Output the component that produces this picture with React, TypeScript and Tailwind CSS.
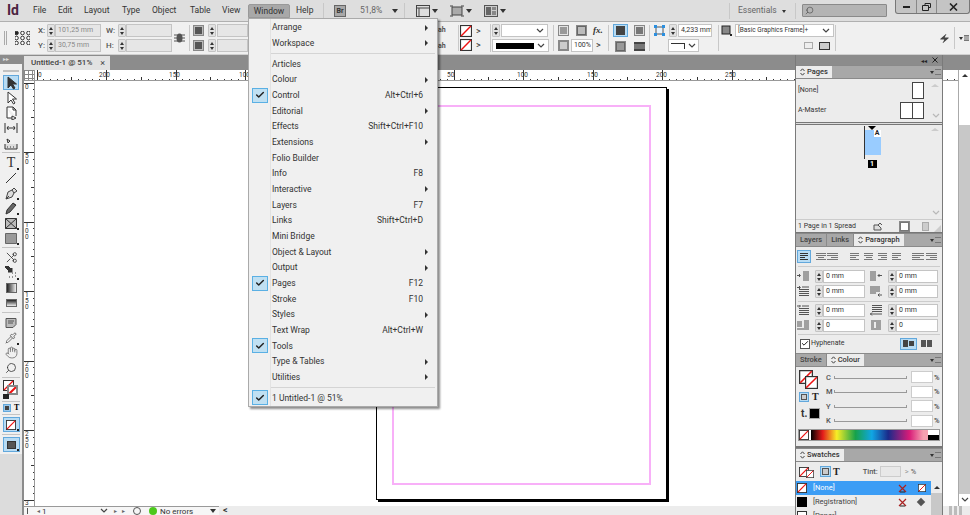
import React from 'react';
import { Hand, Pipette, Scissors, Search, Check, Zap } from 'lucide-react';

const FONT = "font-['Roboto','Noto_Sans',sans-serif]";

function Sep({ className = 'h-[28px]' }: { className?: string }) {
  return <div className={`w-px shrink-0 bg-[#c8c8c8] ${className}`} />;
}

function Spin({ className = 'h-[13px]' }: { className?: string }) {
  return (
    <div className={`w-[8px] shrink-0 flex flex-col justify-center items-center gap-[2px] bg-[#e2e2e2] border border-[#c4c4c4] rounded-[1px] ${className}`}>
      <div className="w-0 h-0 border-x-[2.5px] border-x-transparent border-b-[3px] border-b-[#333]" />
      <div className="w-0 h-0 border-x-[2.5px] border-x-transparent border-t-[3px] border-t-[#333]" />
    </div>
  );
}

function Chevron({ className = '' }: { className?: string }) {
  return (
    <svg width="8" height="6" viewBox="0 0 8 6" className={`shrink-0 ${className}`}>
      <path d="M1 1l3 3 3-3" fill="none" stroke="#444" strokeWidth="1.2" />
    </svg>
  );
}

function Tri({ className = '' }: { className?: string }) {
  return <div className={`w-0 h-0 shrink-0 border-x-[3px] border-x-transparent border-t-[4px] border-t-[#333] ${className}`} />;
}

function Field({ w, text, off, drop, small }: { w: string; text?: string; off?: boolean; drop?: boolean; small?: boolean }) {
  return (
    <div className={`${w} h-[13px] shrink-0 flex items-center justify-between pl-[2px] pr-[3px] border border-[#c4c4c4] ${small ? 'text-[6.5px]' : 'text-[7px]'} font-normal leading-none whitespace-nowrap overflow-hidden ${off ? 'bg-[#e6e6e6] text-[#888]' : 'bg-white text-[#333]'}`}>
      <span>{text}</span>
      {drop && <Chevron />}
    </div>
  );
}

function Glyph({ d, w = 13, h = 13, fill = 'none', stroke = '#333', className = '' }: { d: string; w?: number; h?: number; fill?: string; stroke?: string; className?: string }) {
  return (
    <svg width={w} height={h} viewBox={`0 0 ${w} ${h}`} className={`shrink-0 ${className}`}>
      <path d={d} fill={fill} stroke={stroke} strokeWidth="1" />
    </svg>
  );
}

function NoneBox({ size = 11 }: { size?: number }) {
  return (
    <svg width={size} height={size} viewBox="0 0 11 11" className="shrink-0">
      <rect x="0.5" y="0.5" width="10" height="10" fill="#fff" stroke="#333" />
      <path d="M1 10L10 1" stroke="#e11" strokeWidth="1.3" />
    </svg>
  );
}

function Block({ dark = '#555', light = '#bbb' }: { dark?: string; light?: string }) {
  return (
    <div className="w-[11px] h-[11px] shrink-0 border border-[#888] p-[1px]" style={{ background: light }}>
      <div className="w-full h-full" style={{ background: dark }} />
    </div>
  );
}

function MenuBar() {
  const items: [string, string][] = [
    ['File', 'w-[25px]'], ['Edit', 'w-[26px]'], ['Layout', 'w-[38px]'], ['Type', 'w-[30px]'],
    ['Object', 'w-[38px]'], ['Table', 'w-[32px]'], ['View', 'w-[26px]'],
  ];
  return (
    <div className="h-[22px] flex items-start bg-[#dedede] border-b border-[#b0b0b0] text-[8.5px] text-[#333] shrink-0 overflow-hidden">
      <span className="w-[33px] shrink-0 pl-[7px] text-[14px] leading-[20px] font-bold text-[#4c2442]">Id</span>
      {items.map(([t, w]) => (
        <span key={t} className={`${w} shrink-0 leading-[21px]`}>{t}</span>
      ))}
      <span className="w-[42px] shrink-0 h-[14px] mt-[4px] bg-[#a8a8a8] border border-[#999] rounded-t-[2px] text-center leading-[12px]">Window</span>
      <span className="w-[33px] shrink-0 pl-[6px] leading-[21px]">Help</span>
      <Sep className="h-[16px] mt-[3px]" />
      <div className="w-[12px] h-[12px] shrink-0 ml-[10px] mt-[5px] bg-[#a8a8a8] border border-[#666] text-[7px] leading-[10px] text-center font-bold">Br</div>
      <span className="ml-[14px] w-[32px] shrink-0 leading-[21px] text-[#666]">51,8%</span>
      <Tri className="mt-[9px]" />
      <Sep className="h-[16px] mt-[3px] ml-[6px]" />
      <div className="ml-[11px] mt-[5px] shrink-0 flex items-center gap-[2px]">
        <svg width="14" height="12" viewBox="0 0 14 12"><rect x="0.5" y="0.5" width="13" height="11" fill="#ddd" stroke="#444" /><path d="M0 3h14M3 3v9" stroke="#444" /></svg>
        <Tri />
      </div>
      <div className="ml-[12px] mt-[5px] shrink-0 flex items-center gap-[2px]">
        <svg width="14" height="12" viewBox="0 0 14 12"><rect x="2" y="2" width="10" height="8" fill="#aaa" stroke="#444" /><path d="M0 1h3M0 11h3M11 1h3M11 11h3" stroke="#444" /></svg>
        <Tri />
      </div>
      <div className="ml-[12px] mt-[5px] shrink-0 flex items-center gap-[2px]">
        <svg width="14" height="12" viewBox="0 0 14 12"><rect x="0.5" y="0.5" width="13" height="11" fill="#ccc" stroke="#555" /><rect x="2" y="2" width="5" height="8" fill="#666" /><rect x="8" y="2" width="4" height="3" fill="#888" /><rect x="8" y="6" width="4" height="4" fill="#888" /></svg>
        <Tri />
      </div>
      <Sep className="h-[16px] mt-[3px] ml-[223px]" />
      <span className="w-[52px] shrink-0 pl-[8px] leading-[21px] text-[#666] whitespace-nowrap">Essentials</span>
      <div className="mt-[10px] w-0 h-0 shrink-0 border-x-[2px] border-x-transparent border-t-[3px] border-t-[#333]" />
      <Sep className="h-[16px] mt-[3px] ml-[9px]" />
      <div className="ml-[6px] mt-[4px] w-[85px] h-[13px] shrink-0 bg-[#b4b4b4] border border-[#8a8a8a] rounded-[1px] pl-[2px] flex items-center">
        <Search size={9} strokeWidth={1.4} className="text-[#333] -scale-x-100" />
      </div>
      <div className="ml-[8px] w-[75px] h-[14px] shrink-0 bg-[#c4c4c4] border border-t-0 border-[#777] rounded-b-[3px] flex text-[#222]">
        <div className="w-[21px] flex justify-center items-center border-r border-[#888]"><div className="w-[7px] h-[2px] bg-[#222]" /></div>
        <div className="w-[20px] flex justify-center items-center border-r border-[#888]">
          <svg width="9" height="8" viewBox="0 0 9 8"><path d="M3 2V.5h5.500v4H6.500M.5 2.500h6v5h-6z" fill="none" stroke="#222" /></svg>
        </div>
        <div className="flex-1 flex justify-center items-center">
          <svg width="9" height="8" viewBox="0 0 9 8"><path d="M1 .5l7 7M8 .5l-7 7" stroke="#222" strokeWidth="1.6" /></svg>
        </div>
      </div>
    </div>
  );
}

function ControlBar() {
  return (
    <div className="h-[33px] flex items-center bg-[#f0f0f0] border-b border-[#d0d0d0] text-[#333] shrink-0 overflow-hidden">
      <div className="ml-[4px] w-[3px] h-[14px] shrink-0 border-x border-[#aaa]" />
      <svg width="15" height="14" viewBox="0 0 15 14" className="ml-[8px] shrink-0">
        {[1.5, 7.5, 13.5].map((x) => [2, 7, 12].map((y) => (
          <circle key={`${x}-${y}`} cx={x} cy={y} r="1.8" fill={x === 1.5 && y === 2 ? '#222' : '#fff'} stroke="#333" />
        )))}
      </svg>
      <div className="ml-[8px] shrink-0 flex flex-col gap-[2px] text-[8px] font-medium text-[#555]">
        <div className="flex items-center h-[13px]"><span className="w-[9px]">X:</span><Spin /><Field w="w-[46px]" text="101,25 mm" off /></div>
        <div className="flex items-center h-[13px]"><span className="w-[9px]">Y:</span><Spin /><Field w="w-[46px]" text="30,75 mm" off /></div>
      </div>
      <div className="ml-[5px] shrink-0 flex flex-col gap-[2px] text-[8px] font-medium text-[#555]">
        <div className="flex items-center h-[13px]"><span className="w-[12px]">W:</span><Spin /><Field w="w-[46px]" off /></div>
        <div className="flex items-center h-[13px]"><span className="w-[12px]">H:</span><Spin /><Field w="w-[46px]" off /></div>
      </div>
      <svg width="11" height="12" viewBox="0 0 11 12" className="ml-[2px] shrink-0">
        <ellipse cx="5.5" cy="6" rx="3" ry="4.5" fill="#555" />
        <path d="M0 3h11M0 6h11M0 9h11" stroke="#555" />
      </svg>
      <Sep className="ml-[4px] h-[26px]" />
      <div className="ml-[3px] shrink-0 flex flex-col gap-[2px]">
        <div className="flex items-center h-[13px]"><Block /><Spin className="h-[13px] ml-[4px]" /><div className="ml-[1px]"><Field w="w-[31px]" off /></div></div>
        <div className="flex items-center h-[13px]"><Block /><Spin className="h-[13px] ml-[4px]" /><div className="ml-[1px]"><Field w="w-[31px]" off /></div></div>
      </div>
      {/* everything from here to x=438 sits behind the open menu */}
      <div className="w-[190px] shrink-0" />
      <div className="w-[11px] shrink-0 flex flex-col gap-[5px] text-[7px] font-bold text-[#555]"><span>ah</span><span>ah</span></div>
      <Sep className="ml-[9px] h-[26px]" />
      <div className="ml-[1px] w-[30px] shrink-0 flex flex-col gap-[2px]">
        <div className="flex items-center gap-[4px]"><NoneBox size={12} /><span className="text-[9px] leading-none">&gt;</span></div>
        <div className="flex items-center gap-[4px]"><NoneBox size={12} /><span className="text-[9px] leading-none">&gt;</span></div>
      </div>
      <Sep />
      <div className="ml-[1px] w-[61px] shrink-0 flex flex-col gap-[2px]">
        <div className="flex items-center gap-[1px]"><Spin /><Field w="w-[47px]" drop /></div>
        <div className="w-[57px] h-[13px] bg-white border border-[#c4c4c4] flex items-center justify-between px-[3px]">
          <div className="w-[38px] h-[6px] bg-black" /><Chevron />
        </div>
      </div>
      <Sep className="h-[26px]" />
      <div className="ml-[4px] w-[50px] shrink-0 flex flex-col gap-[2px]">
        <div className="flex items-center h-[13px]">
          <Block dark="#999" light="#e4e4e4" />
          <div className="ml-[7px]"><Block dark="#bbb" light="#666" /></div>
          <span className="ml-[6px] text-[9px] italic font-['Liberation_Serif',serif] font-bold">fx.</span>
        </div>
        <div className="flex items-center h-[13px]">
          <Block dark="#ccc" light="#888" />
          <div className="ml-[2px]"><Field w="w-[22px]" text="100%" /></div>
          <span className="ml-[3px] text-[9px] leading-none">&gt;</span>
        </div>
      </div>
      <Sep className="h-[26px]" />
      <div className="ml-[4px] w-[36px] shrink-0 grid grid-cols-[15px_13px] gap-x-[5px] gap-y-[3px]">
        <div className="h-[13px] bg-[#b8dcf4] border border-[#62a8dc] flex items-center justify-center"><div className="w-[9px] h-[9px] bg-[#444]" /></div>
        <div className="h-[13px] flex items-center justify-center"><Block dark="#777" light="#ddd" /></div>
        <div className="h-[12px] flex items-center justify-center"><Block dark="#999" light="#666" /></div>
        <div className="h-[12px] flex items-center justify-center"><div className="w-[11px] h-[9px] bg-[#777] border-y-2 border-[#444]" /></div>
      </div>
      <Sep className="h-[26px]" />
      <div className="ml-[4px] w-[64px] shrink-0 flex flex-col gap-[2px] items-start">
        <div className="flex items-center h-[13px]">
          <svg width="11" height="11" viewBox="0 0 11 11" className="shrink-0"><rect x="2" y="2" width="7" height="7" fill="#e8f4ff" stroke="#555" /><path d="M0 0h3v3H0zM8 0h3v3H8zM0 8h3v3H0zM8 8h3v3H8z" fill="#2a8fe0" /></svg>
          <Spin className="h-[13px] ml-[4px]" />
          <div className="ml-[1px]"><Field w="w-[34px]" text="4,233 mm" /></div>
        </div>
        <div className="flex ml-[14px] items-center justify-between w-[31px] h-[13px] bg-white border border-[#c4c4c4] px-[2px]">
          <div className="w-[14px] h-[6px] border-t border-r border-[#333]" /><Chevron />
        </div>
      </div>
      <Sep className="h-[26px]" />
      <div className="ml-[2px] w-[114px] shrink-0 flex flex-col gap-[2px] items-start">
        <div className="flex items-center gap-[3px]">
          <svg width="11" height="11" viewBox="0 0 11 11" className="shrink-0"><rect x="1" y="1" width="8" height="8" fill="#888" stroke="#222" /><path d="M9 9h2v2H9z" fill="#222" /></svg>
          <Field w="w-[99px]" text="[Basic Graphics Frame]+" drop small />
        </div>
        <div className="flex gap-[6px] ml-[83px] h-[13px] items-center">
          <div className="w-[9px] h-[7px] border border-[#aaa] bg-[#eee]" />
          <div className="w-[11px] h-[8px] border border-[#333] bg-[#ccc]" />
        </div>
      </div>
      <Sep className="h-[26px]" />
      <Zap size={11} fill="#444" strokeWidth={0} className="ml-[103px] shrink-0 -skew-x-12" />
      <Sep className="ml-[4px] h-[22px]" />
      <div className="ml-[4px] w-0 h-0 shrink-0 border-x-[2px] border-x-transparent border-t-[3px] border-t-[#333]" />
      <div className="ml-[1px] w-[5px] h-[6px] shrink-0 border-y border-[#777] bg-[#aaa]" />
    </div>
  );
}

function ToolIcon({ name }: { name: string }) {
  switch (name) {
    case 'select':
      return <Glyph w={14} h={14} d="M4 1v11l3-3 2.5 4 1.500-1-2.500-4h4z" fill="#333" />;
    case 'direct':
      return <Glyph w={14} h={14} d="M4 1v11l3-3 2.5 4 1.500-1-2.500-4h4z" fill="#fff" />;
    case 'page':
      return <Glyph w={14} h={14} d="M3 1h6l3 3v6M9 1v3h3M3 1v11h5M8 10l4 2-4 2z" fill="#fff" />;
    case 'gap':
      return <Glyph w={14} h={14} d="M1 2v10M13 2v10M3 7h8M4.500 5L3 7l1.500 2M9.500 5L11 7 9.500 9" />;
    case 'collect':
      return <Glyph w={14} h={14} d="M1 8v5h12V8M3 11h1M6 11h1M9 11h1M3 3l3 2-2 2z" fill="#ddd" />;
    case 'type':
      return <span className="font-['Liberation_Serif',serif] text-[14px] leading-none text-[#333]">T</span>;
    case 'line':
      return <Glyph w={14} h={14} d="M2 12L12 2" />;
    case 'pen':
      return <Glyph w={14} h={14} d="M2 13l2-7 4-2 2 3-2 4zM2 13l3-3M8 4l2-2 3 3-3 2" fill="#ddd" stroke="#444" />;
    case 'pencil':
      return <Glyph w={14} h={14} d="M2 13l1-4 6-7 3 2-6 7zM9 2l3 3" fill="#666" stroke="#333" />;
    case 'frame':
      return <Glyph w={14} h={14} d="M1.500 2.500h11v10h-11zM1.500 2.500l11 10M12.500 2.500l-11 10" fill="#bbb" stroke="#333" />;
    case 'rect':
      return <Glyph w={14} h={14} d="M1.500 2.500h11v10h-11z" fill="#999" stroke="#666" />;
    case 'scissors':
      return <Scissors size={13} strokeWidth={1.5} className="text-[#333] -scale-x-100" />;
    case 'free':
      return <Glyph w={14} h={14} d="M1 1l4 4-1 1h4V2L7 3 3 -1zM8 7h1M11 7h1M11 10h1M8 11h1M5 11h1" fill="#333" />;
    case 'gradient':
      return <div className="w-[11px] h-[10px] border border-[#666] bg-[linear-gradient(90deg,#222,#eee)]" />;
    case 'feather':
      return <div className="w-[11px] h-[8px] border border-[#666] bg-[linear-gradient(#222,#eee)]" />;
    case 'note':
      return <Glyph w={14} h={14} d="M2 2.500h10v6l-3 3H2zM4 5h6M4 7h5" fill="#bbb" stroke="#555" />;
    case 'drop':
      return <Pipette size={12} strokeWidth={1.4} className="text-[#444]" />;
    case 'hand':
      return <Hand size={13} strokeWidth={1.3} className="text-[#555]" />;
    default:
      return <Search size={12} strokeWidth={1.6} className="text-[#333] -scale-x-100" />;
  }
}

function ToolBtn({ name, on, corner }: { name: string; on?: boolean; corner?: boolean }) {
  return (
    <div className={`relative h-[15px] w-[16px] mx-auto flex items-center justify-center ${on ? 'bg-[#b8dcf4] border border-[#62a8dc]' : ''}`}>
      <ToolIcon name={name} />
      {corner && <div className="absolute right-0 bottom-0 w-[2px] h-[2px] bg-[#222]" />}
    </div>
  );
}

function ToolSep() {
  return <div className="h-px mx-[2px] my-[2px] bg-[#c4c4c4]" />;
}

function Tools() {
  return (
    <div className="w-[24px] shrink-0 flex flex-col bg-[#dcdcdc] border-r-2 border-[#8c8c8c]">
      <div className="h-[9px] bg-[#8c8c8c] text-[#ddd] text-[6px] leading-[8px] pl-[3px]">▸▸</div>
      <div className="bg-[#f0f0f0] pb-[2px] pt-[6px]">
        <div className="h-[2px] mx-[3px] mb-[3px] border-y border-[#c0c0c0]" />
        <ToolBtn name="select" on />
        <ToolBtn name="direct" />
        <ToolBtn name="page" />
        <ToolBtn name="gap" />
        <ToolBtn name="collect" />
        <ToolSep />
        <ToolBtn name="type" corner />
        <ToolBtn name="line" />
        <ToolBtn name="pen" corner />
        <ToolBtn name="pencil" corner />
        <ToolBtn name="frame" corner />
        <ToolBtn name="rect" corner />
        <ToolSep />
        <ToolBtn name="scissors" />
        <ToolBtn name="free" corner />
        <ToolBtn name="gradient" />
        <ToolBtn name="feather" />
        <ToolSep />
        <ToolBtn name="note" />
        <ToolBtn name="drop" corner />
        <ToolBtn name="hand" />
        <ToolBtn name="zoom" />
        <ToolSep />
        <div className="relative h-[19px] w-[17px] ml-[3px]">
          <NoneBox />
          <div className="absolute left-[4px] top-[5px] w-[11px] h-[10px] border-2 border-[#888] bg-white overflow-hidden">
            <div className="w-[12px] h-[2px] bg-[#e11] -rotate-45 origin-left translate-y-[6px]" />
          </div>
          <div className="absolute left-0 bottom-0 w-[6px] h-[5px] bg-[#222]" />
        </div>
        <ToolSep />
        <div className="flex items-center pl-[3px] gap-[1px] h-[8px]">
          <div className="w-[8px] h-[8px] bg-[#9cc8ea] border border-[#62a8dc] p-[1px]"><div className="w-full h-full bg-[#444]" /></div>
          <span className="text-[8px] leading-none font-bold font-['Liberation_Serif',serif] ml-[2px]">T</span>
        </div>
        <ToolSep />
        <div className="relative h-[15px] w-[17px] mx-auto flex items-center justify-center bg-[#b8dcf4] border border-[#62a8dc]">
          <NoneBox size={10} />
          <div className="absolute right-0 bottom-0 w-[2px] h-[2px] bg-[#222]" />
        </div>
        <ToolSep />
        <div className="relative h-[15px] w-[17px] mx-auto flex items-center justify-center bg-[#b8dcf4] border border-[#62a8dc]">
          <div className="w-[9px] h-[8px] bg-[#555] border border-[#333]" />
          <div className="absolute right-0 bottom-0 w-[2px] h-[2px] bg-[#222]" />
        </div>
      </div>
    </div>
  );
}

const TOP_LABELS: [number, string][] = [
  [1, '0'], [62, '200'], [132, '150'], [202, '100'], [271, '50'], [341, '0'], [410, '50'], [480, '100'], [550, '150'], [619, '200'], [688, '250'], [758, '300'],
];
const SIDE_LABELS: [number, string][] = [[2, '0'], [71, '50'], [140, '100'], [210, '150'], [279, '200'], [349, '250'], [418, '300']];

function TopRuler() {
  const ticks = Array.from({ length: 135 }, (_, i) => i);
  return (
    <svg width="924" height="11" className="block shrink-0">
      <rect width="924" height="11" fill="#fff" />
      {ticks.map((i) => {
        const x = Math.round(1.5 + i * 6.95);
        const h = i % 10 === 0 ? 11 : i % 5 === 0 ? 4 : 2;
        return <line key={i} x1={x + 0.5} x2={x + 0.5} y1={11 - h} y2={11} stroke="#333" />;
      })}
      {TOP_LABELS.map(([x, t]) => (
        <text key={x} x={x + 2} y={7} fontSize="6.5" fill="#333" fontFamily="Roboto, sans-serif">{t}</text>
      ))}
      <line x1="0" x2="924" y1="10.5" y2="10.5" stroke="#999" />
    </svg>
  );
}

function SideRuler() {
  const ticks = Array.from({ length: 62 }, (_, i) => i);
  return (
    <svg width="11" height="425" className="block shrink-0">
      <rect width="11" height="425" fill="#fff" />
      {ticks.map((i) => {
        const y = Math.round(1.5 + i * 6.95);
        const w = i % 10 === 0 ? 11 : i % 5 === 0 ? 4 : 2;
        return <line key={i} x1={11 - w} x2={11} y1={y + 0.5} y2={y + 0.5} stroke="#333" />;
      })}
      {SIDE_LABELS.map(([y, t]) => (
        <text key={y} x={1} y={y + 6} fontSize="6.5" fill="#333" fontFamily="Roboto, sans-serif">
          {t.split('').map((c, i) => (
            <tspan key={i} x={1} dy={i === 0 ? 0 : 6}>{c}</tspan>
          ))}
        </text>
      ))}
      <line x1="10.5" x2="10.5" y1="0" y2="425" stroke="#999" />
    </svg>
  );
}

function StatusBar() {
  return (
    <div className="h-[9px] shrink-0 flex items-start bg-[#ececec] text-[8px] text-[#333] overflow-hidden">
      <div className="w-[195px] shrink-0 flex items-center h-[9px] bg-[#f6f6f6] border-t border-[#999]">
        <span className="ml-[3px] w-[2px] h-[6px] border-l border-[#555]" />
        <span className="ml-[8px] text-[6px] leading-none text-[#666]">◂</span>
        <span className="ml-[2px] w-[60px] leading-[7px]">1</span>
        <Chevron className="ml-[-2px]" />
        <span className="ml-[6px] text-[6px] leading-none text-[#666]">▸</span>
        <span className="ml-[5px] text-[6px] leading-none text-[#666]">▸</span>
        <div className="ml-[8px] w-[8px] h-[8px] shrink-0 rounded-full border border-[#555]" />
        <div className="ml-[8px] w-[8px] h-[8px] shrink-0 rounded-full bg-[#4cc81c]" />
        <span className="ml-[3px] whitespace-nowrap leading-[7px]">No errors</span>
        <Tri className="ml-auto mr-[3px]" />
      </div>
      <span className="ml-[4px] text-[9px] font-bold leading-[8px]">&lt;</span>
      <div className="ml-auto mr-[8px] flex gap-[2px]">
        <div className="w-[3px] h-[9px] bg-[#bbb]" />
        <div className="w-[3px] h-[9px] bg-[#bbb]" />
        <div className="w-[3px] h-[9px] bg-[#bbb]" />
      </div>
    </div>
  );
}

function Canvas() {
  return (
    <div className="flex-1 min-h-0 min-w-0 flex flex-col overflow-hidden">
      <div className="h-[15px] bg-[#8c8c8c] shrink-0 flex items-end">
        <div className="w-[86px] h-[14px] bg-[#e2e2e2] flex items-center justify-between pl-[7px] pr-[5px] text-[8px] font-medium text-[#444]">
          <span className="whitespace-nowrap">Untitled-1 @ 51%</span>
          <span className="text-[9px] leading-none font-normal">×</span>
        </div>
      </div>
      <div className="flex h-[11px] shrink-0">
        <div className="w-[11px] h-[11px] shrink-0 bg-white border-r border-b border-[#999] bg-[linear-gradient(#888_1px,transparent_1px),linear-gradient(90deg,#888_1px,transparent_1px)] bg-[length:4px_4px]" />
        <TopRuler />
      </div>
      <div className="flex flex-1 min-h-0">
        <SideRuler />
        <div className="w-[923px] shrink-0 bg-white pl-[341px] pt-[6px]">
          <div className="w-[291px] h-[413px] bg-white border border-black shadow-[2px_2px_0_#000] pl-[15px] pt-[17px]">
            <div className="w-[259px] h-[380px] border-2 border-[#f8b0f8]" />
          </div>
        </div>
      </div>
    </div>
  );
}

const MENU_A: [string, string?, boolean?][] = [['Arrange', '', true], ['Workspace', '', true]];
const MENU_B: [string, string?, boolean?, boolean?][] = [
  ['Articles'], ['Colour', '', true], ['Control', 'Alt+Ctrl+6', false, true], ['Editorial', '', true],
  ['Effects', 'Shift+Ctrl+F10'], ['Extensions', '', true], ['Folio Builder'], ['Info', 'F8'],
  ['Interactive', '', true], ['Layers', 'F7'], ['Links', 'Shift+Ctrl+D'], ['Mini Bridge'],
  ['Object & Layout', '', true], ['Output', '', true], ['Pages', 'F12', false, true], ['Stroke', 'F10'],
  ['Styles', '', true], ['Text Wrap', 'Alt+Ctrl+W'], ['Tools', '', false, true], ['Type & Tables', '', true], ['Utilities', '', true],
];

function MenuRow({ label, keys, sub, checked }: { label: string; keys?: string; sub?: boolean; checked?: boolean }) {
  return (
    <div className="h-[15.67px] flex items-center text-[8.5px] text-[#333]">
      <div className="w-[22px] shrink-0 flex justify-center">
        {checked && (
          <div className="w-[16px] h-[15px] bg-[#c0e0f2] border border-[#5ab0e4] flex items-center justify-center">
            <Check size={10} strokeWidth={3.5} className="text-[#222]" />
          </div>
        )}
      </div>
      <span className="pl-[1px] flex-1 whitespace-nowrap">{label}</span>
      {keys && <span className="pr-[14px] whitespace-nowrap">{keys}</span>}
      {sub && <div className="mr-[9px] w-0 h-0 border-y-[3px] border-y-transparent border-l-[3px] border-l-[#333]" />}
    </div>
  );
}

function WindowMenu() {
  return (
    <div className="absolute left-[248px] top-[18px] w-[190px] h-[389px] pt-[1px] bg-[#f0f0f0] border border-[#aaa] shadow-[2px_2px_2px_rgba(0,0,0,0.45)] z-20">
      <div className="absolute left-[21px] top-0 bottom-0 w-px bg-[#e2e2e2]" />
      {MENU_A.map(([l, k, s]) => <MenuRow key={l} label={l} keys={k} sub={s} />)}
      <div className="ml-[22px] mr-[2px] my-[2px] h-px bg-[#d4d4d4]" />
      {MENU_B.map(([l, k, s, c]) => <MenuRow key={l} label={l} keys={k} sub={s} checked={c} />)}
      <div className="ml-[22px] mr-[2px] my-[2px] h-px bg-[#d4d4d4]" />
      <MenuRow label="1 Untitled-1 @ 51%" checked />
    </div>
  );
}

function PanelMenu() {
  return (
    <div className="ml-auto mr-[1px] flex items-center gap-[1px]">
      <div className="w-0 h-0 border-x-[2px] border-x-transparent border-t-[3px] border-t-[#333]" />
      <div className="w-[6px] h-[6px] border-y border-[#777] bg-[#aaa]" />
    </div>
  );
}

function PanelTabs({ tabs, active }: { tabs: string[]; active: string }) {
  return (
    <div className="h-[14px] shrink-0 flex items-stretch bg-[#a8a8a8] border-y border-[#8a8a8a] text-[7.5px] font-medium text-[#444]">
      {tabs.map((t) => (
        <div key={t} className={`px-[4px] flex items-center whitespace-nowrap ${t === active ? 'bg-[#ececec] text-[#333]' : 'border-r border-[#8a8a8a]'}`}>
          {t === active && (
            <svg width="5" height="8" viewBox="0 0 5 8" className="mr-[2px]"><path d="M.5 3L2.500.8 4.500 3M.5 5l2 2.200L4.500 5" fill="none" stroke="#444" /></svg>
          )}
          {t}
        </div>
      ))}
      <PanelMenu />
    </div>
  );
}

function ScrollUp() {
  return <div className="w-0 h-0 border-x-[4px] border-x-transparent border-b-[3px] border-b-[#ccc]" />;
}

function PagesPanel() {
  return (
    <>
      <PanelTabs tabs={['Pages']} active="Pages" />
      <div className="h-[43px] shrink-0 relative bg-[#ececec] text-[7px] text-[#333] pr-[12px] pl-[2px]">
        <div className="h-[22px] flex items-center justify-between">
          <span>[None]</span>
          <div className="w-[12px] h-[17px] bg-white border border-[#444] mr-[6px]" />
        </div>
        <div className="h-[19px] flex items-center justify-between">
          <span>A-Master</span>
          <div className="w-[24px] h-[17px] bg-white border border-[#444] flex justify-center mr-[6px]"><div className="w-px bg-[#444]" /></div>
        </div>
        <div className="absolute right-[3px] top-[5px]"><ScrollUp /></div>
        <Chevron className="absolute right-[2px] bottom-[3px] opacity-30" />
      </div>
      <div className="h-[3px] shrink-0 border-y border-[#777] bg-[#ddd]" />
      <div className="h-[94px] shrink-0 relative bg-[#ececec] flex flex-col items-center pl-[1px] pr-[11px]">
        <div className="flex flex-col items-center pl-[16px]">
          <div className="w-0 h-0 mt-[1px] border-x-[4px] border-x-transparent border-t-[4px] border-t-black" />
          <div className="relative w-[17px] h-[25px] bg-[#99ccff] border-l border-[#333]">
            <div className="absolute -left-px -top-[4px] -bottom-[4px] w-px bg-[#333]" />
            <span className="absolute right-0 top-0 w-[7px] h-[7px] bg-white text-[7px] leading-[7px] text-center font-bold text-[#222]">A</span>
          </div>
          <div className="mt-[5px] w-[9px] h-[8px] bg-black text-white text-[7px] leading-[8px] text-center font-bold">1</div>
        </div>
        <div className="absolute right-[3px] top-[3px]"><ScrollUp /></div>
        <Chevron className="absolute right-[2px] bottom-[3px] opacity-30" />
      </div>
      <div className="h-[13px] shrink-0 flex items-center bg-[#ececec] border-t border-[#ccc] text-[7px] text-[#333] pl-[2px]">
        <span className="w-[75px] whitespace-nowrap">1 Page in 1 Spread</span>
        <Glyph w={10} h={9} d="M1 8V3h4l3 3v2zM5 3l2-2 2 2" fill="#ddd" stroke="#555" />
        <div className="ml-[16px]"><Block dark="#fff" light="#777" /></div>
        <div className="ml-[12px] w-[7px] h-[9px] bg-[#ccc] border border-[#aaa]" />
        <svg width="7" height="7" viewBox="0 0 7 7" className="ml-auto mr-[1px] mt-[4px]"><path d="M7 0v7H0z" fill="#ccc" /></svg>
      </div>
    </>
  );
}

const PARA_ICONS = {
  left: 'M0 4.500h3M2 3l1.500 1.500L2 6M6 1h6M6 3h6M6 5h6M6 7h6M6 9h6',
  right: 'M0 1h6M0 3h6M0 5h6M0 7h6M0 9h6M12 4.500H8M9.500 3L8 4.500 9.500 6',
  first: 'M0 1.500h3M2 0l1.500 1.500L2 3M5 1h7M2 3.500h10M2 5.500h10M2 7.500h10M2 9.500h10',
  last: 'M0 1h10M0 3h10M0 5h10M0 7h6M8 9h4M9.500 7.500L8 9l1.500 1.500',
  before: 'M0 1h3M2 -.5L3.500 1 2 2.500M2 3.500h10M2 5.500h10M2 7.500h10M2 9.500h10M5 1h7',
  after: 'M2 .5h10M2 2.500h10M2 4.500h10M2 6.500h10M0 9h12M2 7.500L.5 9 2 10.500',
  cap: 'M0 2h5M0 4h5M0 6h5M7 1h5M7 3h5M7 5h5M7 7h5M0 9h12',
  caps: 'M1 1h10M1 3h3M1 5h3M1 7h3M6 3h5M6 5h5M6 7h5M1 9h10',
};

function ParaField({ icon, text }: { icon: keyof typeof PARA_ICONS; text: string }) {
  return (
    <div className="flex items-center w-[68px]">
      <div className="w-[18px] flex">
        <Glyph w={13} h={11} d={PARA_ICONS[icon]} stroke="#555" />
      </div>
      <Spin />
      <Field w="w-[42px]" text={text} />
    </div>
  );
}

// align buttons: [margin, width, line insets]
const ALIGNS: [string, string, string][] = [
  ['ml-[5px]', 'w-[10px]', 'items-center'], ['ml-[1px]', 'w-[11px]', 'items-end'],
  ['ml-[12px]', 'w-[9px]', 'items-start'], ['ml-[5px]', 'w-[9px]', 'items-center'],
  ['ml-[5px]', 'w-[9px]', 'items-end'], ['ml-[5px]', 'w-[9px]', 'items-stretch'],
  ['ml-[11px]', 'w-[12px]', 'items-start'], ['ml-[2px]', 'w-[11px]', 'items-end'],
];

function ParagraphPanel() {
  return (
    <>
      <PanelTabs tabs={['Layers', 'Links', 'Paragraph']} active="Paragraph" />
      <div className="h-[106px] shrink-0 bg-[#ececec] px-[1px] text-[7px] text-[#333]">
        <div className="h-[19px] flex items-center">
          <div className="w-[14px] h-[13px] shrink-0 bg-[#b8dcf4] border border-[#62a8dc] flex flex-col justify-center gap-[1px] px-[2px]">
            <div className="h-[1px] bg-[#333]" /><div className="h-[1px] bg-[#333]" /><div className="h-[1px] bg-[#333] mr-[3px]" /><div className="h-[1px] bg-[#333]" />
          </div>
          {ALIGNS.map(([m, w, a], i) => (
            <div key={i} className={`${m} ${w} shrink-0 flex flex-col gap-[1px] ${a}`}>
              <div className="w-full h-[1px] bg-[#777]" />
              <div className="w-full h-[1px] bg-[#777]" />
              <div className="w-2/3 h-[1px] bg-[#777]" />
              <div className="w-full h-[1px] bg-[#777]" />
            </div>
          ))}
        </div>
        <div className="h-px mx-[1px] bg-[#ccc]" />
        <div className="grid grid-cols-[68px_68px] gap-x-[5px] gap-y-[2px] py-[3px]">
          <ParaField icon="left" text="0 mm" />
          <ParaField icon="right" text="0 mm" />
          <ParaField icon="first" text="0 mm" />
          <ParaField icon="last" text="0 mm" />
        </div>
        <div className="h-px mx-[1px] bg-[#ccc]" />
        <div className="grid grid-cols-[68px_68px] gap-x-[5px] gap-y-[2px] py-[2px]">
          <ParaField icon="before" text="0 mm" />
          <ParaField icon="after" text="0 mm" />
          <ParaField icon="cap" text="0" />
          <ParaField icon="caps" text="0" />
        </div>
        <div className="h-px mx-[1px] bg-[#ccc]" />
        <div className="h-[17px] flex items-center">
          <div className="ml-[3px] w-[10px] h-[10px] bg-white border border-[#555] flex items-center justify-center">
            <Check size={9} strokeWidth={3} className="text-[#222]" />
          </div>
          <span className="ml-[1px]">Hyphenate</span>
          <div className="ml-auto mr-[4px] w-[17px] h-[12px] bg-[#b8dcf4] border border-[#62a8dc] flex items-center justify-center gap-[1px]">
            <div className="w-[5px] h-[7px] bg-[#444]" /><div className="w-[5px] h-[5px] bg-[#444]" />
          </div>
          <div className="mr-[9px] flex gap-[1px]"><div className="w-[5px] h-[7px] bg-[#555]" /><div className="w-[5px] h-[7px] bg-[#555]" /></div>
        </div>
      </div>
    </>
  );
}

function ColourPanel() {
  return (
    <>
      <PanelTabs tabs={['Stroke', 'Colour']} active="Colour" />
      <div className="h-[79px] shrink-0 bg-[#ececec] flex flex-col px-[2px] text-[7.5px] text-[#555]">
        <div className="flex h-[62px]">
          <div className="w-[28px] pt-[3px] pl-[1px]">
            <div className="relative w-[20px] h-[20px]">
              <NoneBox size={14} />
              <div className="absolute left-[6px] top-[6px]"><NoneBox size={13} /></div>
            </div>
            <div className="flex items-center gap-[1px] mt-[2px]">
              <div className="w-[10px] h-[10px] bg-[#b8dcf4] border border-[#62a8dc] p-[1px]"><div className="w-full h-full bg-[#ccc] border border-[#555]" /></div>
              <span className="ml-[2px] text-[#222] font-bold text-[10px] leading-none font-['Liberation_Serif',serif]">T</span>
            </div>
            <div className="flex items-center mt-[6px] ml-[2px] gap-[2px]">
              <span className="text-[10px] leading-none font-bold text-[#333]">t.</span>
              <div className="w-[11px] h-[11px] bg-black border border-[#aaa]" />
            </div>
          </div>
          <div className="flex-1 pt-[3px]">
            {['C', 'M', 'Y', 'K'].map((c) => (
              <div key={c} className="h-[14.5px] flex items-center">
                <span className="w-[8px] font-medium">{c}</span>
                <div className="w-[73px] h-[3px] border-x border-b border-[#999]" />
                <div className="ml-[4px] w-[22px] h-[12px] bg-white border border-[#ccc]" />
                <span className="ml-[1px] font-medium text-[#444]">%</span>
              </div>
            ))}
          </div>
        </div>
        <div className="flex h-[12px] border border-[#999] bg-white">
          <NoneBox size={10} />
          <div className="w-[2px]" />
          <div className="flex-1 bg-[linear-gradient(90deg,#000,#e31b1b_10%,#f7ee26_22%,#16a24a_38%,#10a6e4_52%,#1a2a8a_66%,#d81b78_84%,#f6a0b0_96%)]" />
          <div className="w-[11px] flex flex-col"><div className="flex-1 bg-white" /><div className="flex-1 bg-black" /></div>
        </div>
      </div>
    </>
  );
}

function SwatchRow({ label, selected, swatch, end }: { label: string; selected?: boolean; swatch: React.ReactNode; end?: React.ReactNode }) {
  return (
    <div className={`h-[14px] flex items-center text-[7.5px] pl-[1px] ${selected ? 'bg-[#3c9df5] text-white' : 'text-[#444]'}`}>
      <div className="w-[15px]">{swatch}</div>
      <span className="ml-[1px] flex-1">{label}</span>
      {label !== '[Paper]' && (
        <>
          <svg width="9" height="9" viewBox="0 0 9 9" className="mr-[11px]"><path d="M1 1l7 7M8 1L1 8" stroke="#a22" strokeWidth="1.2" /><path d="M2 8h5" stroke="#222" /></svg>
          <div className="w-[9px] mr-[4px]">{end}</div>
        </>
      )}
    </div>
  );
}

function SwatchesPanel() {
  return (
    <>
      <div className="h-[2px] shrink-0 bg-[#777]" />
      <PanelTabs tabs={['Swatches']} active="Swatches" />
      <div className="h-[19px] shrink-0 bg-[#ececec] flex items-center px-[3px] text-[7.5px] text-[#555]">
        <NoneBox size={10} />
        <div className="-ml-[3px] mt-[4px]"><NoneBox size={8} /></div>
        <div className="ml-[6px] w-[11px] h-[11px] bg-[#b8dcf4] border border-[#62a8dc] p-[1px]"><div className="w-full h-full bg-[#ccc] border border-[#555]" /></div>
        <span className="ml-[2px] text-[#222] font-bold text-[10px] leading-none font-['Liberation_Serif',serif]">T</span>
        <span className="ml-[23px] font-medium">Tint:</span>
        <div className="ml-[2px] w-[21px] h-[11px] bg-[#e8e8e8] border border-[#ccc]" />
        <span className="ml-[4px] text-[#999]">&gt;</span>
        <span className="ml-[2px]">%</span>
      </div>
      <div className="flex-1 min-h-0 flex overflow-hidden bg-[#ececec]">
        <div className="flex-1">
          <SwatchRow label="[None]" selected swatch={<NoneBox size={10} />} end={<NoneBox size={8} />} />
          <SwatchRow label="[Registration]" swatch={<div className="w-[10px] h-[10px] bg-black" />} end={<div className="w-[6px] h-[6px] rotate-45 bg-[#555]" />} />
          <SwatchRow label="[Paper]" swatch={<div className="w-[10px] h-[10px] bg-white border border-[#333]" />} />
        </div>
        <div className="w-[11px] bg-[#c8c8c8] flex flex-col">
          <div className="h-[12px] bg-[#ececec] flex items-center justify-center"><div className="w-0 h-0 border-x-[3px] border-x-transparent border-b-[3px] border-b-[#333]" /></div>
        </div>
      </div>
    </>
  );
}

function Dock() {
  return (
    <div className="absolute left-[795px] top-[55px] w-[148px] h-[460px] flex flex-col border-x border-[#7a7a7a] bg-[#ececec] z-10">
      <div className="h-[10px] shrink-0 bg-[#8c8c8c] flex items-center justify-end gap-[5px] pr-[4px] text-[6px] text-[#222]">
        <span>◂◂</span>
        <svg width="6" height="6" viewBox="0 0 6 6"><path d="M.5.5l5 5M5.500.5l-5 5" stroke="#222" /></svg>
      </div>
      <PagesPanel />
      <div className="h-[1px] shrink-0 bg-[#777]" />
      <ParagraphPanel />
      <ColourPanel />
      <SwatchesPanel />
    </div>
  );
}

function ScrollBar() {
  return (
    <div className="absolute left-[958px] top-[70px] w-[12px] h-[436px] flex flex-col bg-white border-l border-[#aaa] z-10">
      <div className="h-[11px] flex items-center justify-center"><div className="w-0 h-0 border-x-[3px] border-x-transparent border-b-[3px] border-b-[#333]" /></div>
      <div className="h-[44px]" />
      <div className="h-[369px] bg-[#c8c8c8]" />
      <div className="h-[12px] flex items-center justify-center"><Chevron /></div>
    </div>
  );
}

export default function App() {
  return (
    <div className={`relative w-[970px] h-[515px] overflow-hidden flex flex-col bg-[#dcdcdc] ${FONT}`}>
      <MenuBar />
      <ControlBar />
      <div className="flex flex-1 min-h-0 bg-white">
        <Tools />
        <div className="flex-1 min-w-0 min-h-0 flex flex-col overflow-hidden">
          <Canvas />
          <StatusBar />
        </div>
      </div>
      <WindowMenu />
      <Dock />
      <ScrollBar />
    </div>
  );
}
